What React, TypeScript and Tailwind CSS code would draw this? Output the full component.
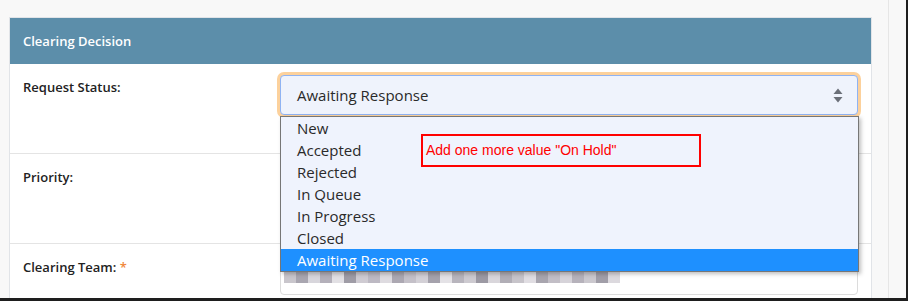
import React from 'react'

const options = ['New', 'Accepted', 'Rejected', 'In Queue', 'In Progress', 'Closed', 'Awaiting Response']

// pixelated (redacted) text in the Clearing Team field
const mosaic = ['#c9c6cc', '#a9a6b0', '#d8d6dc', '#b4b0ba', '#e2e0e4', '#9f9ca6', '#cfcbd2', '#bdb9c3', '#dedbe0', '#aca8b2', '#c4c0c8', '#d3d0d6', '#a5a2ac', '#e4e2e6', '#b8b5bd', '#cdcad0', '#9c99a3', '#d9d6db', '#b1aeb6', '#c7c4ca', '#e0dde2', '#a8a5ae', '#c2bec6', '#d6d3d9', '#b6b2bb', '#cbc8ce', '#a19ea8', '#dcd9de']

function SortIcon() {
  return (
    <svg width="10" height="15" viewBox="0 0 10 15" className="text-[#6b6f78]">
      <path d="M5 0.5 L9.5 6 L0.5 6 Z" fill="currentColor" />
      <path d="M5 14.5 L9.5 9 L0.5 9 Z" fill="currentColor" />
    </svg>
  )
}

export default function App() {
  return (
    <div className="w-[908px] h-[301px] overflow-hidden flex bg-[#f8f8f8] border-b-[3px] border-r-[2px] border-[#1e1e1e] font-['Open_Sans','Noto_Sans',sans-serif]">
      <div className="w-[889px] shrink-0 pl-[9px] pt-[17px] border-r border-[#e6e6e6]">
        {/* panel */}
        <div className="w-[863px] border border-b-0 border-[#e1e4e8] bg-white">
          <div className="h-[46px] bg-[#5c8eaa] px-[13px] pt-[1px] flex items-center text-white text-[13px] font-semibold">
            Clearing Decision
          </div>

          {/* Request Status */}
          <div className="h-[90px] flex border-b border-[#e4e4e4]">
            <div className="w-[270px] pl-[13px] pt-[14px] text-[13px] font-semibold text-[#222]">Request Status:</div>
            <div className="pt-[11px]">
              <div className="relative z-10 w-[578px] h-[40px] rounded-[4px] border border-[#8fb3f3] bg-[#eff3fc] shadow-[0_0_0_3px_#fcd19c] flex items-center justify-between pl-[16px] pr-[14px]">
                <span className="text-[15px] text-[#2a2a2a]">Awaiting Response</span>
                <SortIcon />
                {/* open list */}
                <div className="absolute left-[-1px] top-[40px] w-[579px] border border-[#767676] bg-[#eff3fd] shadow-[2px_2px_4px_rgba(0,0,0,0.25)]">
                  {options.map((o, i) => (
                    <div
                      key={o}
                      className={`h-[22px] pl-[16px] flex items-center text-[15px] ${
                        i === options.length - 1 ? 'bg-[#1e90ff] text-white' : 'text-[#2a2a2a]'
                      }`}
                    >
                      {o}
                    </div>
                  ))}
                  <div className="absolute left-[140px] top-[17px] w-[280px] h-[33px] border-2 border-[#ff0000] flex items-center pl-[3px] text-[14px] text-[#ff0000] font-['Liberation_Sans',Arial,sans-serif]">
                    Add one more value "On Hold"
                  </div>
                </div>
              </div>
            </div>
          </div>

          {/* Priority */}
          <div className="h-[90px] flex border-b border-[#e4e4e4]">
            <div className="w-[270px] pl-[13px] pt-[14px] text-[13px] font-semibold text-[#222]">Priority:</div>
            <div className="pt-[11px]">
              <div className="w-[578px] h-[40px] rounded-[4px] border border-[#dcdcdc] bg-white" />
            </div>
          </div>

          {/* Clearing Team */}
          <div className="h-[90px] flex">
            <div className="w-[270px] pl-[13px] pt-[14px] text-[13px] font-semibold text-[#222]">
              Clearing Team: <span className="text-[#f0883e]">*</span>
            </div>
            <div className="pt-[11px]">
              <div className="w-[578px] h-[40px] rounded-[4px] border border-[#dcdcdc] bg-white pt-[15px] pl-[3px]">
                <div className="flex w-[336px] h-[12px]">
                  {mosaic.map((c, i) => (
                    <div key={i} className="w-[12px] h-[12px]" style={{ backgroundColor: c }} />
                  ))}
                </div>
              </div>
            </div>
          </div>
        </div>
      </div>
      <div className="flex-1" />
    </div>
  )
}
